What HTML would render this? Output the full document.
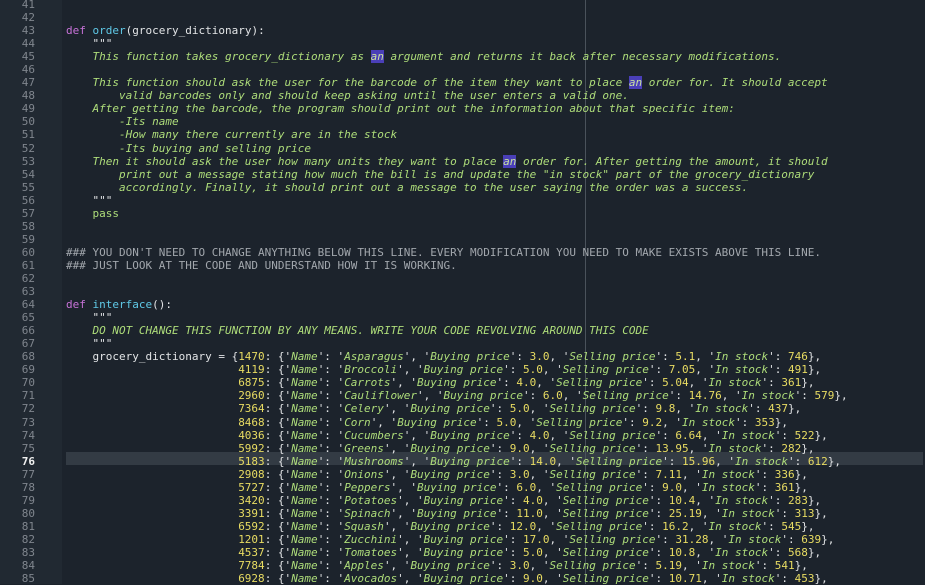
<!DOCTYPE html>
<html><head><meta charset="utf-8"><style>
html,body{margin:0;padding:0;width:925px;height:584px;overflow:hidden;background:#1c232c}
#g{position:absolute;left:0;top:0;width:62px;height:584px;background:#212932}
#guide{position:absolute;left:585px;top:0;width:1px;height:584px;background:#4a525b}
#hl{position:absolute;left:66px;width:857px;top:452px;height:13px;background:#333b44}
pre{margin:0;position:absolute;top:-2px;font:11px/13.05px "DejaVu Sans Mono","Liberation Mono",monospace;white-space:pre}
#ln{left:0;width:35px;text-align:right;color:#80868e}
#ln b{color:#f0f0f0}
#code{left:66px;color:#e2e4e6}
.k{color:#c772d8}.f{color:#5fc8e6}.n{color:#e8dc62}.c{color:#a2a7ad}
i,.d{color:#aedd7a;font-style:italic}
.m{background:#4a3fb8;color:#c8e0a0}
</style></head><body>
<div id="g"></div><div id="hl"></div><div id="guide"></div>
<pre id="ln">41
42
43
44
45
46
47
48
49
50
51
52
53
54
55
56
57
58
59
60
61
62
63
64
65
66
67
68
69
70
71
72
73
74
75
<b>76</b>
77
78
79
80
81
82
83
84
85</pre>
<pre id="code">


<span class="k">def</span> <span class="f">order</span>(grocery_dictionary):
    """
<span class="d">    This function takes grocery_dictionary as <span class="m">an</span> argument and returns it back after necessary modifications.

    This function should ask the user for the barcode of the item they want to place <span class="m">an</span> order for. It should accept
        valid barcodes only and should keep asking until the user enters a valid one.
    After getting the barcode, the program should print out the information about that specific item:
        -Its name
        -How many there currently are in the stock
        -Its buying and selling price
    Then it should ask the user how many units they want to place <span class="m">an</span> order for. After getting the amount, it should
        print out a message stating how much the bill is and update the "in stock" part of the grocery_dictionary
        accordingly. Finally, it should print out a message to the user saying the order was a success.</span>
    """
    <span class="f" style="color:#aedd7a">pass</span>


<span class="c">### YOU DON'T NEED TO CHANGE ANYTHING BELOW THIS LINE. EVERY MODIFICATION YOU NEED TO MAKE EXISTS ABOVE THIS LINE.</span>
<span class="c">### JUST LOOK AT THE CODE AND UNDERSTAND HOW IT IS WORKING.</span>


<span class="k">def</span> <span class="f">interface</span>():
    """
<span class="d">    DO NOT CHANGE THIS FUNCTION BY ANY MEANS. WRITE YOUR CODE REVOLVING AROUND THIS CODE</span>
    """
    grocery_dictionary = {<span class="n">1470</span>: {'<i>Name</i>': '<i>Asparagus</i>', '<i>Buying price</i>': <span class="n">3.0</span>, '<i>Selling price</i>': <span class="n">5.1</span>, '<i>In stock</i>': <span class="n">746</span>},
                          <span class="n">4119</span>: {'<i>Name</i>': '<i>Broccoli</i>', '<i>Buying price</i>': <span class="n">5.0</span>, '<i>Selling price</i>': <span class="n">7.05</span>, '<i>In stock</i>': <span class="n">491</span>},
                          <span class="n">6875</span>: {'<i>Name</i>': '<i>Carrots</i>', '<i>Buying price</i>': <span class="n">4.0</span>, '<i>Selling price</i>': <span class="n">5.04</span>, '<i>In stock</i>': <span class="n">361</span>},
                          <span class="n">2960</span>: {'<i>Name</i>': '<i>Cauliflower</i>', '<i>Buying price</i>': <span class="n">6.0</span>, '<i>Selling price</i>': <span class="n">14.76</span>, '<i>In stock</i>': <span class="n">579</span>},
                          <span class="n">7364</span>: {'<i>Name</i>': '<i>Celery</i>', '<i>Buying price</i>': <span class="n">5.0</span>, '<i>Selling price</i>': <span class="n">9.8</span>, '<i>In stock</i>': <span class="n">437</span>},
                          <span class="n">8468</span>: {'<i>Name</i>': '<i>Corn</i>', '<i>Buying price</i>': <span class="n">5.0</span>, '<i>Selling price</i>': <span class="n">9.2</span>, '<i>In stock</i>': <span class="n">353</span>},
                          <span class="n">4036</span>: {'<i>Name</i>': '<i>Cucumbers</i>', '<i>Buying price</i>': <span class="n">4.0</span>, '<i>Selling price</i>': <span class="n">6.64</span>, '<i>In stock</i>': <span class="n">522</span>},
                          <span class="n">5992</span>: {'<i>Name</i>': '<i>Greens</i>', '<i>Buying price</i>': <span class="n">9.0</span>, '<i>Selling price</i>': <span class="n">13.95</span>, '<i>In stock</i>': <span class="n">282</span>},
                          <span class="n">5183</span>: {'<i>Name</i>': '<i>Mushrooms</i>', '<i>Buying price</i>': <span class="n">14.0</span>, '<i>Selling price</i>': <span class="n">15.96</span>, '<i>In stock</i>': <span class="n">612</span>},
                          <span class="n">2908</span>: {'<i>Name</i>': '<i>Onions</i>', '<i>Buying price</i>': <span class="n">3.0</span>, '<i>Selling price</i>': <span class="n">7.11</span>, '<i>In stock</i>': <span class="n">336</span>},
                          <span class="n">5727</span>: {'<i>Name</i>': '<i>Peppers</i>', '<i>Buying price</i>': <span class="n">6.0</span>, '<i>Selling price</i>': <span class="n">9.0</span>, '<i>In stock</i>': <span class="n">361</span>},
                          <span class="n">3420</span>: {'<i>Name</i>': '<i>Potatoes</i>', '<i>Buying price</i>': <span class="n">4.0</span>, '<i>Selling price</i>': <span class="n">10.4</span>, '<i>In stock</i>': <span class="n">283</span>},
                          <span class="n">3391</span>: {'<i>Name</i>': '<i>Spinach</i>', '<i>Buying price</i>': <span class="n">11.0</span>, '<i>Selling price</i>': <span class="n">25.19</span>, '<i>In stock</i>': <span class="n">313</span>},
                          <span class="n">6592</span>: {'<i>Name</i>': '<i>Squash</i>', '<i>Buying price</i>': <span class="n">12.0</span>, '<i>Selling price</i>': <span class="n">16.2</span>, '<i>In stock</i>': <span class="n">545</span>},
                          <span class="n">1201</span>: {'<i>Name</i>': '<i>Zucchini</i>', '<i>Buying price</i>': <span class="n">17.0</span>, '<i>Selling price</i>': <span class="n">31.28</span>, '<i>In stock</i>': <span class="n">639</span>},
                          <span class="n">4537</span>: {'<i>Name</i>': '<i>Tomatoes</i>', '<i>Buying price</i>': <span class="n">5.0</span>, '<i>Selling price</i>': <span class="n">10.8</span>, '<i>In stock</i>': <span class="n">568</span>},
                          <span class="n">7784</span>: {'<i>Name</i>': '<i>Apples</i>', '<i>Buying price</i>': <span class="n">3.0</span>, '<i>Selling price</i>': <span class="n">5.19</span>, '<i>In stock</i>': <span class="n">541</span>},
                          <span class="n">6928</span>: {'<i>Name</i>': '<i>Avocados</i>', '<i>Buying price</i>': <span class="n">9.0</span>, '<i>Selling price</i>': <span class="n">10.71</span>, '<i>In stock</i>': <span class="n">453</span>},</pre>
</body></html>
